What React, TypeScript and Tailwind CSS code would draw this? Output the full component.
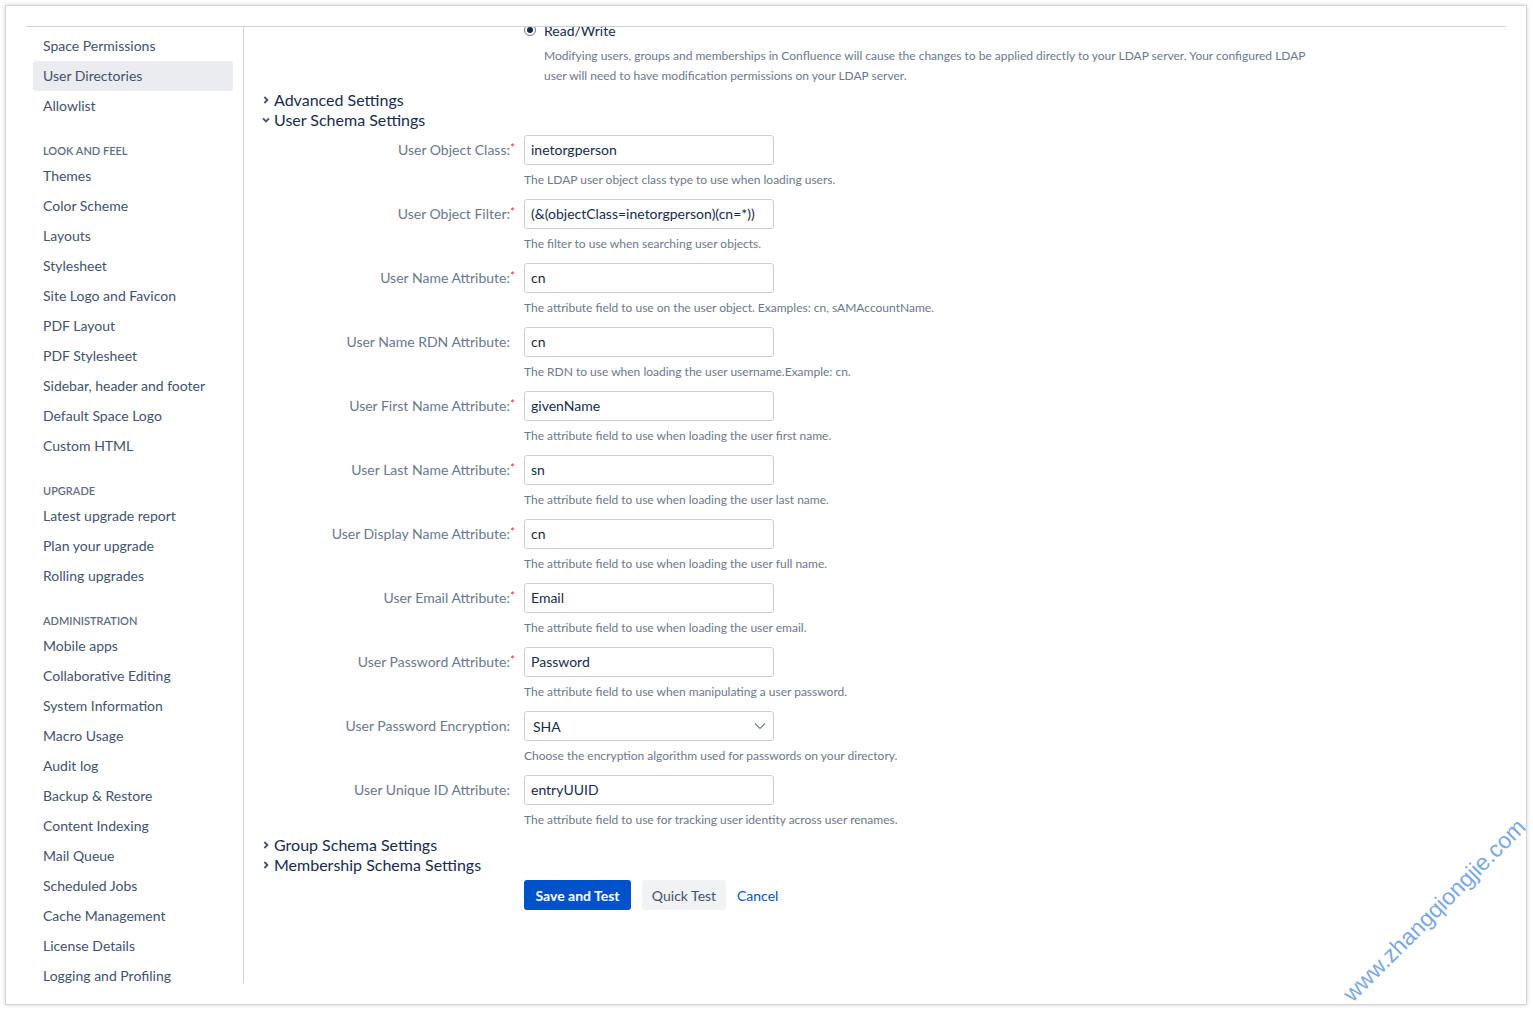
import React from "react";

const F = { fontFamily: "Lato, 'Noto Sans', sans-serif" };

type Sec = { header?: string; items: string[] };
const sidebar: Sec[] = [
  { items: ["Space Permissions", "User Directories", "Allowlist"] },
  {
    header: "LOOK AND FEEL",
    items: [
      "Themes",
      "Color Scheme",
      "Layouts",
      "Stylesheet",
      "Site Logo and Favicon",
      "PDF Layout",
      "PDF Stylesheet",
      "Sidebar, header and footer",
      "Default Space Logo",
      "Custom HTML",
    ],
  },
  { header: "UPGRADE", items: ["Latest upgrade report", "Plan your upgrade", "Rolling upgrades"] },
  {
    header: "ADMINISTRATION",
    items: [
      "Mobile apps",
      "Collaborative Editing",
      "System Information",
      "Macro Usage",
      "Audit log",
      "Backup & Restore",
      "Content Indexing",
      "Mail Queue",
      "Scheduled Jobs",
      "Cache Management",
      "License Details",
      "Logging and Profiling",
    ],
  },
];

type Row = { label: string; req: boolean; value: string; desc: string; select?: boolean };
const rows: Row[] = [
  { label: "User Object Class:", req: true, value: "inetorgperson", desc: "The LDAP user object class type to use when loading users." },
  { label: "User Object Filter:", req: true, value: "(&(objectClass=inetorgperson)(cn=*))", desc: "The filter to use when searching user objects." },
  { label: "User Name Attribute:", req: true, value: "cn", desc: "The attribute field to use on the user object. Examples: cn, sAMAccountName." },
  { label: "User Name RDN Attribute:", req: false, value: "cn", desc: "The RDN to use when loading the user username.Example: cn." },
  { label: "User First Name Attribute:", req: true, value: "givenName", desc: "The attribute field to use when loading the user first name." },
  { label: "User Last Name Attribute:", req: true, value: "sn", desc: "The attribute field to use when loading the user last name." },
  { label: "User Display Name Attribute:", req: true, value: "cn", desc: "The attribute field to use when loading the user full name." },
  { label: "User Email Attribute:", req: true, value: "Email", desc: "The attribute field to use when loading the user email." },
  { label: "User Password Attribute:", req: true, value: "Password", desc: "The attribute field to use when manipulating a user password." },
  { label: "User Password Encryption:", req: false, value: "SHA", desc: "Choose the encryption algorithm used for passwords on your directory.", select: true },
  { label: "User Unique ID Attribute:", req: false, value: "entryUUID", desc: "The attribute field to use for tracking user identity across user renames." },
];

function Chevron({ down }: { down?: boolean }) {
  return (
    <svg width="8" height="8" viewBox="0 0 8 8" className="mr-[4px] shrink-0">
      {down ? (
        <path d="M1 2.4 L4 5.4 L7 2.4" fill="none" stroke="#42526e" strokeWidth="1.8" />
      ) : (
        <path d="M2.4 1 L5.4 4 L2.4 7" fill="none" stroke="#42526e" strokeWidth="1.8" />
      )}
    </svg>
  );
}

function Toggle({ label, down }: { label: string; down?: boolean }) {
  return (
    <div className="flex items-center h-[20px] text-[16px] leading-[20px] text-[#172b4d]">
      <Chevron down={down} />
      <span>{label}</span>
    </div>
  );
}

export default function App() {
  return (
    <div className="w-[1533px] h-[1010px] bg-white relative overflow-hidden p-[5px]" style={F}>
      <div className="w-[1522px] h-[1000px] border border-[#d4d4d4] shadow-[0_0_4px_rgba(0,0,0,0.18)] bg-white pt-[20px] px-[20px]">
        <div className="border-t border-[#d0d0d0] flex h-[957px]">
          {/* Sidebar */}
          <div className="w-[218px] shrink-0 border-r border-[#d0d0d0] pt-[4px] pl-[7px] pr-[10px]">
            {sidebar.map((s, i) => (
              <div key={i}>
                {s.header && (
                  <div className="mt-[20px] h-[20px] leading-[20px] text-[11px] font-semibold text-[#5e6c84] pl-[10px]">
                    {s.header}
                  </div>
                )}
                {s.items.map((it) => (
                  <div
                    key={it}
                    className={
                      "h-[30px] leading-[30px] text-[14px] pl-[10px] rounded-[3px] text-[#42526e] " +
                      (it === "User Directories" ? "bg-[#ebecf0]" : "")
                    }
                  >
                    {it}
                  </div>
                ))}
              </div>
            ))}
          </div>

          {/* Main */}
          <div className="flex-1 overflow-hidden pl-[18px]">
            <div className="mt-[-7px] ml-[262px]">
              <div className="flex items-center h-[20px] text-[14px] text-[#172b4d]">
                <span className="w-[12px] h-[12px] rounded-full border border-[#6b778c] flex items-center justify-center mr-[8px]">
                  <span className="w-[6px] h-[6px] rounded-full bg-[#172b4d]" />
                </span>
                Read/Write
              </div>
              <div className="pl-[20px] mt-[6px] text-[12px] leading-[20px] text-[#6b778c] w-[800px]">
                Modifying users, groups and memberships in Confluence will cause the changes to be applied directly to your LDAP server. Your configured LDAP
                <br />
                user will need to have modification permissions on your LDAP server.
              </div>
            </div>

            <div className="mt-[4px]">
              <Toggle label="Advanced Settings" />
              <Toggle label="User Schema Settings" down />
            </div>

            <div className="mt-[5px] -ml-[18px]">
              {rows.map((r) => (
                <div key={r.label} className="flex h-[64px]">
                  <div className="w-[266px] shrink-0 text-right text-[14px] leading-[30px] text-[#6b778c]">
                    <span className="relative">
                      {r.label}
                      {r.req && (
                        <span className="absolute right-[-5px] top-[-8px] text-[11px] text-[#de350b]">*</span>
                      )}
                    </span>
                  </div>
                  <div className="ml-[14px]">
                    {r.select ? (
                      <div className="w-[250px] h-[30px] border border-[#c9ced6] rounded-[3px] flex items-center justify-between pl-[8px] pr-[7px] text-[14px] text-[#172b4d]">
                        <span>{r.value}</span>
                        <svg width="12" height="8" viewBox="0 0 12 8">
                          <path d="M1 1.5 L6 6.5 L11 1.5" fill="none" stroke="#6b778c" strokeWidth="1.1" />
                        </svg>
                      </div>
                    ) : (
                      <div className="w-[250px] h-[30px] border border-[#c9ced6] rounded-[3px] flex items-center px-[6px] pb-[1px] text-[14px] text-[#172b4d] whitespace-nowrap overflow-hidden">
                        {r.value}
                      </div>
                    )}
                    <div className="mt-[5px] h-[20px] leading-[20px] text-[12px] text-[#6b778c] whitespace-nowrap">
                      {r.desc}
                    </div>
                  </div>
                </div>
              ))}
            </div>

            <div className="mt-[-4px]">
              <Toggle label="Group Schema Settings" />
              <Toggle label="Membership Schema Settings" />
            </div>

            <div className="mt-[5px] ml-[262px] flex items-center">
              <button className="h-[30px] w-[107px] rounded-[3px] bg-[#0052cc] text-white text-[14px] font-bold">
                Save and Test
              </button>
              <button className="h-[30px] w-[84px] ml-[11px] rounded-[3px] bg-[#f1f2f4] text-[#42526e] text-[14px]">
                Quick Test
              </button>
              <span className="ml-[11px] text-[14px] text-[#0052cc]">Cancel</span>
            </div>
          </div>
        </div>
      </div>

      <div
        className="absolute left-[1311px] top-[893px] text-[23px] text-[#7ba7e3] whitespace-nowrap -rotate-45 origin-center"
        style={{ fontFamily: "'Liberation Sans', Arial, sans-serif" }}
      >
        www.zhangqiongjie.com
      </div>
    </div>
  );
}
